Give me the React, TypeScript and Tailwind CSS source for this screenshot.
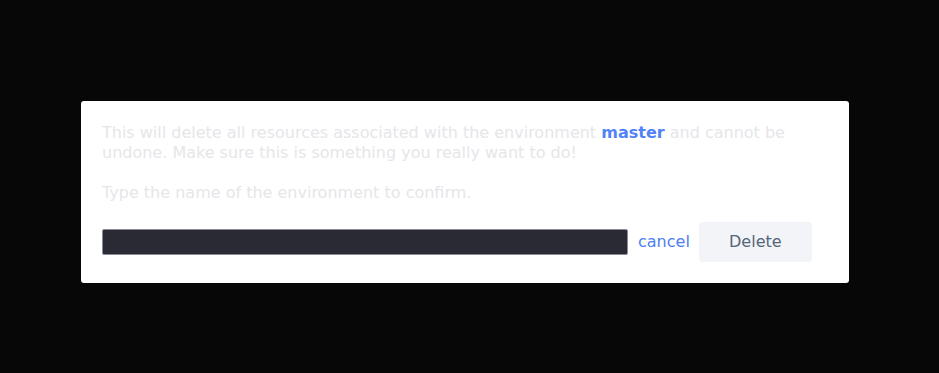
import React from "react";

export default function App() {
  return (
    <div className="w-[939px] h-[373px] bg-[#070707] pt-[101px] pl-[81px]" style={{ fontFamily: '"DejaVu Sans", sans-serif' }}>
      <div className="w-[768px] h-[182px] bg-white rounded-[3px] pt-[22px] px-[21px]">
        <p className="text-[16px] leading-[20px] text-[#e6e6e9]">
          This will delete all resources associated with the environment{" "}
          <span className="font-bold text-[#5282f7]">master</span> and cannot be undone. Make sure this is something you really want to do!
        </p>
        <p className="mt-[20px] text-[16px] leading-[20px] text-[#e6e6e9]">Type the name of the environment to confirm.</p>
        <div className="mt-[19px] flex items-center">
          <input className="w-[526px] h-[26px] bg-[#2a2a35] border border-[#8a8a98] rounded-[2px] outline-none" />
          <span className="ml-[10px] text-[16px] text-[#4d7ef2]">cancel</span>
          <button className="ml-[9px] w-[113px] h-[40px] bg-[#f3f4f7] rounded-[4px] text-[16px] text-[#566579]">Delete</button>
        </div>
      </div>
    </div>
  );
}
